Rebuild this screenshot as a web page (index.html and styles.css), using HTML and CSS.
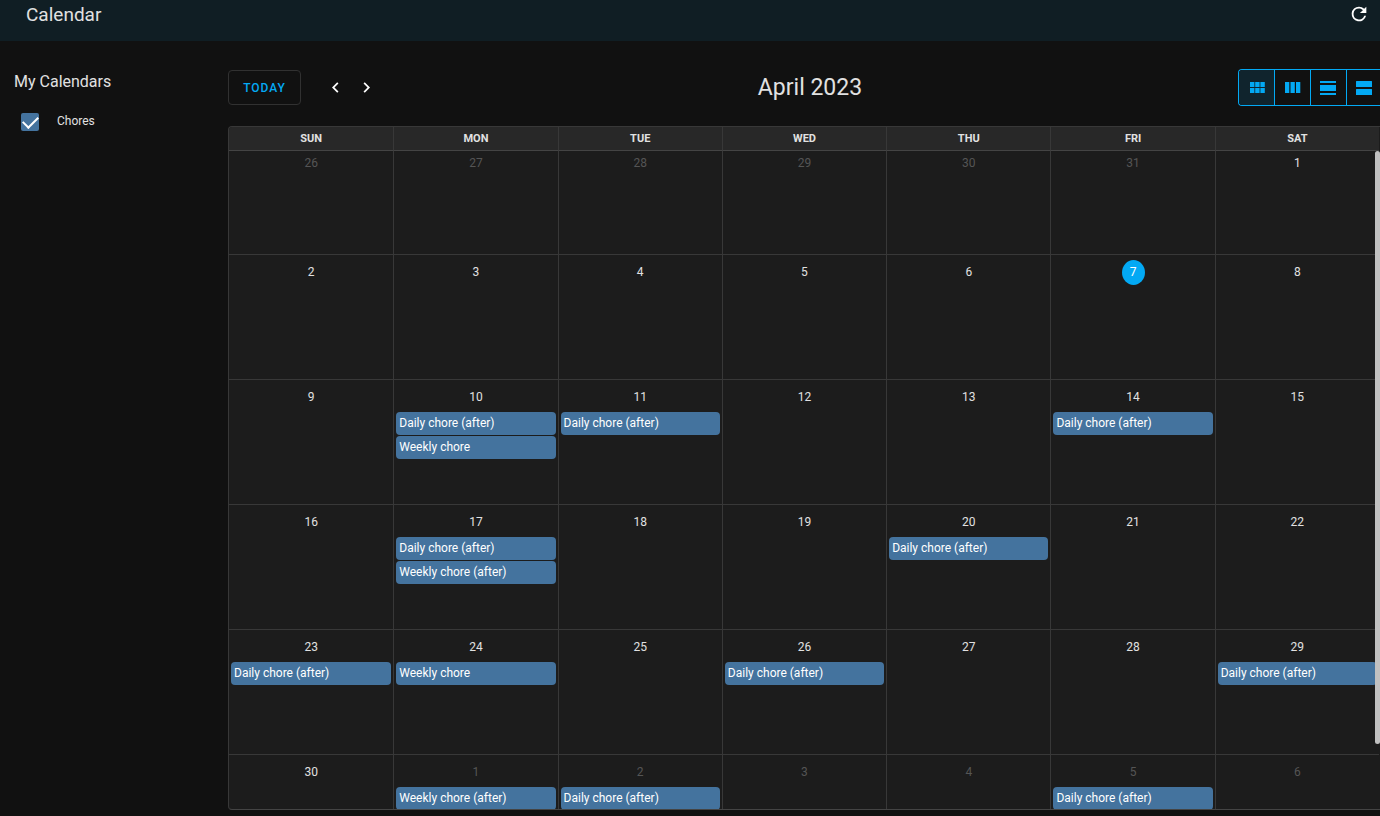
FILE: index.html
```html
<!DOCTYPE html>
<html lang="en">
<head>
    <meta charset="UTF-8">
    <meta name="viewport" content="width=device-width, initial-scale=1.0">
    <title>Calendar</title>
    <link rel="stylesheet" href="styles.css">
</head>
<body>
    <header class="app-bar">
        <h1>Calendar</h1>
        <button class="refresh" type="button" aria-label="Refresh">
            <svg width="22" height="22" viewBox="0 0 24 24"><path d="M17.65 6.35A7.958 7.958 0 0 0 12 4a8 8 0 1 0 7.73 10h-2.08A5.99 5.99 0 1 1 12 6c1.66 0 3.14.69 4.22 1.78L13 11h7V4l-2.35 2.35Z"/></svg>
        </button>
    </header>

    <div class="layout">
        <aside class="sidebar">
            <h2>My Calendars</h2>
            <label class="calendar-item">
                <input type="checkbox" checked>
                <span>Chores</span>
            </label>
        </aside>

        <main class="content">
            <div class="toolbar">
                <div class="navigation">
                    <button class="today" type="button">TODAY</button>
                    <button class="arrow" type="button" aria-label="Previous month">
                        <svg width="21" height="21" viewBox="0 0 24 24"><path d="M15.41 16.58 10.83 12l4.58-4.59L14 6l-6 6 6 6 1.41-1.42Z"/></svg>
                    </button>
                    <button class="arrow" type="button" aria-label="Next month">
                        <svg width="21" height="21" viewBox="0 0 24 24"><path d="M8.59 16.58 13.17 12 8.59 7.41 10 6l6 6-6 6-1.41-1.42Z"/></svg>
                    </button>
                </div>
                <h2 class="month">April 2023</h2>
                <div class="views">
                    <button class="active" type="button" aria-label="Month">
                        <svg width="18" height="18" viewBox="0 0 18 18"><path d="M2 3h4.4v5H2zM7.2 3h4.4v5H7.2zM12.4 3h4.4v5h-4.4zM2 9h4.4v5H2zM7.2 9h4.4v5H7.2zM12.4 9h4.4v5h-4.4z"/></svg>
                    </button>
                    <button type="button" aria-label="Week">
                        <svg width="18" height="18" viewBox="0 0 18 18"><path d="M1 3h4.3v11H1zM6.5 3h4.3v11H6.5zM12 3h4.3v11H12z"/></svg>
                    </button>
                    <button type="button" aria-label="Day">
                        <svg width="18" height="18" viewBox="0 0 18 18"><path d="M0 2h16v2H0zM0 6h16v6H0zM0 14h16v2H0z"/></svg>
                    </button>
                    <button type="button" aria-label="List">
                        <svg width="18" height="18" viewBox="0 0 18 18"><path d="M.5 2h15q.5 0 .5.5v5q0 .5-.5.5H.5Q0 8 0 7.500v-5Q0 2 .5 2zM.5 10h15q.5 0 .5.5v5q0 .5-.5.5H.5q-.5 0-.5-.5v-5q0-.5.5-.5z"/></svg>
                    </button>
                </div>
            </div>

            <div class="calendar">
                <table>
                    <thead>
                        <tr><th>SUN</th><th>MON</th><th>TUE</th><th>WED</th><th>THU</th><th>FRI</th><th>SAT</th></tr>
                    </thead>
                    <tbody>
                        <tr class="first">
                            <td class="other"><span class="day">26</span></td>
                            <td class="other"><span class="day">27</span></td>
                            <td class="other"><span class="day">28</span></td>
                            <td class="other"><span class="day">29</span></td>
                            <td class="other"><span class="day">30</span></td>
                            <td class="other"><span class="day">31</span></td>
                            <td><span class="day">1</span></td>
                        </tr>
                        <tr>
                            <td><span class="day">2</span></td>
                            <td><span class="day">3</span></td>
                            <td><span class="day">4</span></td>
                            <td><span class="day">5</span></td>
                            <td><span class="day">6</span></td>
                            <td><span class="day current">7</span></td>
                            <td><span class="day">8</span></td>
                        </tr>
                        <tr>
                            <td><span class="day">9</span></td>
                            <td>
                                <span class="day">10</span>
                                <a class="event" href="#">Daily chore (after)</a>
                                <a class="event" href="#">Weekly chore</a>
                            </td>
                            <td>
                                <span class="day">11</span>
                                <a class="event" href="#">Daily chore (after)</a>
                            </td>
                            <td><span class="day">12</span></td>
                            <td><span class="day">13</span></td>
                            <td>
                                <span class="day">14</span>
                                <a class="event" href="#">Daily chore (after)</a>
                            </td>
                            <td><span class="day">15</span></td>
                        </tr>
                        <tr>
                            <td><span class="day">16</span></td>
                            <td>
                                <span class="day">17</span>
                                <a class="event" href="#">Daily chore (after)</a>
                                <a class="event" href="#">Weekly chore (after)</a>
                            </td>
                            <td><span class="day">18</span></td>
                            <td><span class="day">19</span></td>
                            <td>
                                <span class="day">20</span>
                                <a class="event" href="#">Daily chore (after)</a>
                            </td>
                            <td><span class="day">21</span></td>
                            <td><span class="day">22</span></td>
                        </tr>
                        <tr>
                            <td>
                                <span class="day">23</span>
                                <a class="event" href="#">Daily chore (after)</a>
                            </td>
                            <td>
                                <span class="day">24</span>
                                <a class="event" href="#">Weekly chore</a>
                            </td>
                            <td><span class="day">25</span></td>
                            <td>
                                <span class="day">26</span>
                                <a class="event" href="#">Daily chore (after)</a>
                            </td>
                            <td><span class="day">27</span></td>
                            <td><span class="day">28</span></td>
                            <td>
                                <span class="day">29</span>
                                <a class="event" href="#">Daily chore (after)</a>
                            </td>
                        </tr>
                        <tr>
                            <td><span class="day">30</span></td>
                            <td class="other">
                                <span class="day">1</span>
                                <a class="event" href="#">Weekly chore (after)</a>
                            </td>
                            <td class="other">
                                <span class="day">2</span>
                                <a class="event" href="#">Daily chore (after)</a>
                            </td>
                            <td class="other"><span class="day">3</span></td>
                            <td class="other"><span class="day">4</span></td>
                            <td class="other">
                                <span class="day">5</span>
                                <a class="event" href="#">Daily chore (after)</a>
                            </td>
                            <td class="other"><span class="day">6</span></td>
                        </tr>
                    </tbody>
                </table>
                <div class="scrollbar"></div>
            </div>
        </main>
    </div>
</body>
</html>
```

FILE: styles.css
```css
* {
    box-sizing: border-box;
}
body {
    display: flex;
    flex-direction: column;
    height: 100vh;
    margin: 0;
    overflow: hidden;
    background-color: #111111;
    color: #e1e1e1;
    font-family: Roboto, sans-serif;
    font-size: 12px;
}
h1, h2 {
    margin: 0;
    font-weight: 400;
}
button {
    padding: 0;
    border: none;
    background: none;
    color: #e1e1e1;
    font-family: inherit;
    cursor: pointer;
}
svg {
    display: block;
    fill: currentColor;
}

/* top bar */
.app-bar {
    display: flex;
    justify-content: space-between;
    align-items: flex-start;
    height: 41px;
    padding: 3px 10px 0 26px;
    background-color: #101e24;
}
.app-bar h1 {
    font-size: 19px;
    line-height: 23px;
}
.refresh {
    color: #ffffff;
}

.layout {
    display: flex;
    flex: 1;
    min-height: 0;
}

/* sidebar */
.sidebar {
    width: 228px;
    padding: 31px 14px;
}
.sidebar h2 {
    font-size: 16px;
    line-height: 20px;
}
.calendar-item {
    display: flex;
    align-items: center;
    gap: 18px;
    margin-top: 19px;
    padding-left: 7px;
    line-height: 20px;
}
.calendar-item input {
    appearance: none;
    display: grid;
    place-items: center;
    width: 18px;
    height: 18px;
    margin: 2px 0 0;
    border-radius: 2px;
    background-color: #44739e;
}
.calendar-item input:checked::before {
    content: "";
    width: 13px;
    height: 7px;
    margin-bottom: 4px;
    border: solid #ffffff;
    border-width: 0 0 2px 2px;
    transform: rotate(-45deg);
}

/* toolbar */
.content {
    display: flex;
    flex-direction: column;
    flex: 1;
    min-width: 0;
    padding: 28px 0 6px;
}
.toolbar {
    display: flex;
    justify-content: space-between;
    align-items: center;
    margin-bottom: 20px;
}
.navigation {
    display: flex;
    align-items: center;
}
.today {
    width: 73px;
    height: 35px;
    margin-right: 19px;
    border: 1px solid #313131;
    border-radius: 4px;
    color: #03a9f4;
    font-size: 12px;
    font-weight: 500;
    letter-spacing: 1px;
}
.arrow {
    display: flex;
    justify-content: center;
    width: 31px;
    color: #ffffff;
}
.month {
    font-size: 23px;
    line-height: 28px;
}
.views {
    display: flex;
    margin-right: -3px;
    border: 1px solid #03a9f4;
    border-right: none;
    border-radius: 4px 0 0 4px;
    overflow: hidden;
}
.views button {
    display: flex;
    justify-content: center;
    align-items: center;
    width: 36px;
    height: 35px;
    border-right: 1px solid #03a9f4;
    color: #03a9f4;
}
.views .active {
    background-color: #10242d;
}

/* month grid */
.calendar {
    position: relative;
    flex: 1;
    min-height: 0;
    padding-right: 1px;
    border: 1px solid #383838;
    border-right: none;
    border-bottom-color: #444444;
    border-radius: 4px 0 0 4px;
    background-color: #1c1c1c;
    overflow: hidden;
}
table {
    width: 100%;
    table-layout: fixed;
    border-spacing: 0;
}
th {
    height: 24px;
    padding: 0 0 1px;
    border-bottom: 1px solid #444444;
    background-color: #282828;
    font-size: 11px;
    font-weight: 700;
}
td {
    height: 125px;
    padding: 5px 2px 0;
    border-bottom: 1px solid #383838;
    vertical-align: top;
}
th + th,
td + td {
    border-left: 1px solid #383838;
}
.first td {
    height: 104px;
    padding-top: 0;
}
.day {
    display: block;
    width: 23px;
    margin: 0 auto 2px;
    border-radius: 50%;
    line-height: 25px;
    text-align: center;
}
.other .day {
    color: #555555;
}
.current {
    background-color: #03a9f4;
    color: #ffffff;
}
.event {
    display: block;
    height: 23px;
    margin-bottom: 1px;
    padding: 0 3px;
    border-radius: 4px;
    background-color: #44739e;
    color: #ffffff;
    line-height: 23px;
    text-decoration: none;
    white-space: nowrap;
    overflow: hidden;
}
.scrollbar {
    position: absolute;
    top: 24px;
    right: 0;
    width: 5px;
    height: 87%;
    border-radius: 3px;
    background-color: #c1c1c1;
}
```
